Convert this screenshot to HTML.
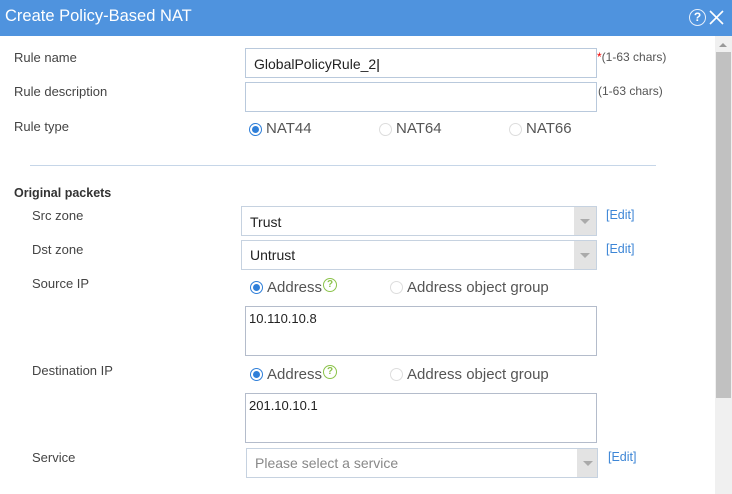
<!DOCTYPE html>
<html><head><style>
*{margin:0;padding:0;box-sizing:border-box}
body{width:732px;height:494px;overflow:hidden;background:#fff;font-family:"Liberation Sans",sans-serif;position:relative;color:#333}
.a{position:absolute;white-space:nowrap}
.hdr{left:0;top:0;width:732px;height:36px;background:#4f93de}
.lbl{font-size:13px;color:#444}
.in{border:1px solid #b9c9dc;background:#fff}
.txt{font-size:14px;color:#222}
.sel{border:1px solid #c6d2e0;background:#fff}
.arr{position:absolute;right:0;top:0;width:22px;height:100%;background:#e3e3e3}
.arr:after{content:"";position:absolute;left:6px;top:12px;border-left:5px solid transparent;border-right:5px solid transparent;border-top:5px solid #aaa}
.rad{width:13px;height:13px;border-radius:50%;border:1px solid #ddd;background:#fff}
.rad.on{border:1px solid #2f7fd9}
.rad.on:after{content:"";position:absolute;left:2px;top:2px;width:7px;height:7px;border-radius:50%;background:#2f7fd9}
.rt{font-size:15px;color:#555}
.edit{font-size:12.5px;color:#3d86d6}
.hint{font-size:12px;color:#555}
.q{width:14px;height:14px;border:1.5px solid #8bc34a;border-radius:50%;color:#8bc34a;font-size:10px;font-weight:bold;text-align:center;line-height:11px}
</style></head><body>
<div class="a hdr"></div>
<div class="a" style="left:5px;top:7px;font-size:16.5px;color:#fff">Create Policy-Based NAT</div>
<div class="a" style="left:689px;top:9px;width:17px;height:17px;border:1.5px solid #e6effb;border-radius:50%;color:#fff;font-size:12px;font-weight:bold;text-align:center;line-height:14px">?</div>
<svg class="a" style="left:709px;top:10px" width="15" height="15"><path d="M1 1L14 14M14 1L1 14" stroke="#fff" stroke-width="1.6"/></svg>

<div class="a" style="left:715px;top:36px;width:17px;height:458px;background:#f0f0f0"></div>
<div class="a" style="left:719px;top:43px;border-left:4px solid transparent;border-right:4px solid transparent;border-bottom:4px solid #999"></div>
<div class="a" style="left:716px;top:52px;width:15px;height:346px;background:#c1c1c1"></div>

<div class="a lbl" style="left:14px;top:50px">Rule name</div>
<div class="a in" style="left:245px;top:48px;width:352px;height:30px"></div>
<div class="a txt" style="left:254px;top:56px">GlobalPolicyRule_2<span style="color:#000">|</span></div>
<div class="a hint" style="left:597px;top:50px"><span style="color:#e00">*</span>(1-63 chars)</div>

<div class="a lbl" style="left:14px;top:84px">Rule description</div>
<div class="a in" style="left:245px;top:82px;width:352px;height:30px"></div>
<div class="a hint" style="left:598px;top:84px">(1-63 chars)</div>

<div class="a lbl" style="left:14px;top:119px">Rule type</div>
<div class="a rad on" style="left:249px;top:123px"></div><div class="a rt" style="left:266px;top:120px">NAT44</div>
<div class="a rad" style="left:379px;top:123px"></div><div class="a rt" style="left:396px;top:120px">NAT64</div>
<div class="a rad" style="left:509px;top:123px"></div><div class="a rt" style="left:526px;top:120px">NAT66</div>

<div class="a" style="left:30px;top:165px;width:626px;height:1px;background:#c6d6e8"></div>

<div class="a" style="left:14px;top:186px;font-size:12.5px;font-weight:bold;color:#333">Original packets</div>

<div class="a lbl" style="left:32px;top:208px">Src zone</div>
<div class="a sel" style="left:241px;top:206px;width:356px;height:30px"><div class="arr"></div></div>
<div class="a txt" style="left:250px;top:214px">Trust</div>
<div class="a edit" style="left:606px;top:208px">[Edit]</div>

<div class="a lbl" style="left:32px;top:242px">Dst zone</div>
<div class="a sel" style="left:241px;top:240px;width:356px;height:30px"><div class="arr"></div></div>
<div class="a txt" style="left:250px;top:247px">Untrust</div>
<div class="a edit" style="left:606px;top:242px">[Edit]</div>

<div class="a lbl" style="left:32px;top:276px">Source IP</div>
<div class="a rad on" style="left:250px;top:281px"></div><div class="a rt" style="left:267px;top:279px">Address</div>
<div class="a q" style="left:323px;top:278px">?</div>
<div class="a rad" style="left:390px;top:281px"></div><div class="a rt" style="left:407px;top:279px">Address object group</div>
<div class="a in" style="left:245px;top:306px;width:352px;height:50px;border-color:#b4bccb"></div>
<div class="a" style="left:249px;top:311px;font-size:13px;color:#222">10.110.10.8</div>

<div class="a lbl" style="left:32px;top:363px">Destination IP</div>
<div class="a rad on" style="left:250px;top:368px"></div><div class="a rt" style="left:267px;top:366px">Address</div>
<div class="a q" style="left:323px;top:365px">?</div>
<div class="a rad" style="left:390px;top:368px"></div><div class="a rt" style="left:407px;top:366px">Address object group</div>
<div class="a in" style="left:245px;top:393px;width:352px;height:50px;border-color:#b4bccb"></div>
<div class="a" style="left:249px;top:398px;font-size:13px;color:#222">201.10.10.1</div>

<div class="a lbl" style="left:32px;top:450px">Service</div>
<div class="a sel" style="left:246px;top:448px;width:352px;height:30px"><div class="arr" style="width:20px"></div></div>
<div class="a" style="left:255px;top:455px;font-size:14px;color:#888">Please select a service</div>
<div class="a edit" style="left:608px;top:450px">[Edit]</div>
</body></html>
